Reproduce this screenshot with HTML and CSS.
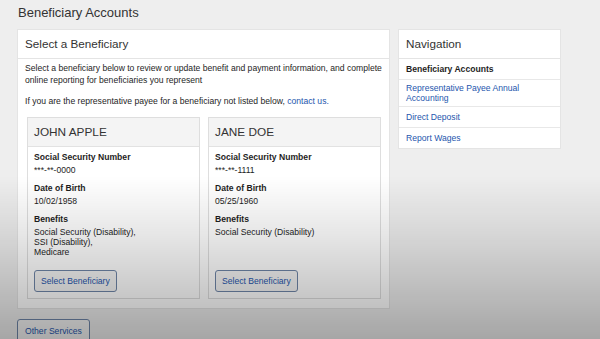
FILE: index.html
```html
<!DOCTYPE html>
<html>
<head>
<meta charset="utf-8">
<link rel="stylesheet" href="styles.css">
</head>
<body>
<div class="page">
  <h1 class="title">Beneficiary Accounts</h1>
  <div class="layout">
    <section class="panel main">
      <div class="panel-head">Select a Beneficiary</div>
      <div class="panel-body">
        <p class="intro">Select a beneficiary below to review or update benefit and payment information, and complete online reporting for beneficiaries you represent</p>
        <p class="intro second">If you are the representative payee for a beneficiary not listed below, <a class="link">contact us.</a></p>
        <div class="cards">
          <div class="card">
            <div class="card-head">JOHN APPLE</div>
            <div class="card-body">
              <div class="label">Social Security Number</div>
              <div class="value">***-**-0000</div>
              <div class="label">Date of Birth</div>
              <div class="value">10/02/1958</div>
              <div class="label">Benefits</div>
              <div class="value">Social Security (Disability),<br>SSI (Disability),<br>Medicare</div>
              <button class="btn">Select Beneficiary</button>
            </div>
          </div>
          <div class="card">
            <div class="card-head">JANE DOE</div>
            <div class="card-body">
              <div class="label">Social Security Number</div>
              <div class="value">***-**-1111</div>
              <div class="label">Date of Birth</div>
              <div class="value">05/25/1960</div>
              <div class="label">Benefits</div>
              <div class="value">Social Security (Disability)</div>
              <div class="spacer"></div>
              <button class="btn">Select Beneficiary</button>
            </div>
          </div>
        </div>
      </div>
    </section>
    <nav class="panel nav">
      <div class="panel-head">Navigation</div>
      <ul class="nav-list">
        <li class="nav-item current">Beneficiary Accounts</li>
        <li class="nav-item"><a class="link">Representative Payee Annual Accounting</a></li>
        <li class="nav-item"><a class="link">Direct Deposit</a></li>
        <li class="nav-item"><a class="link">Report Wages</a></li>
      </ul>
    </nav>
  </div>
  <button class="btn other">Other Services</button>
</div>
<div class="shade"></div>
</body>
</html>
```
FILE: styles.css
```css
html, body {
  margin: 0;
  padding: 0;
  height: 100%;
  overflow: hidden;
}
body {
  background: #eeeeee;
  font-family: "Liberation Sans", Arial, sans-serif;
  color: #1e1e1e;
}
.page {
  padding: 4px 0 0 17px;
}
.title {
  margin: 0 0 0 1px;
  font-size: 13px;
  font-weight: normal;
  line-height: 17px;
  height: 25px;
  color: #333;
}
.layout {
  display: flex;
  align-items: flex-start;
  gap: 8px;
}
.panel {
  background: #fff;
  border: 1px solid #e4e4e4;
  box-sizing: border-box;
}
.main {
  width: 373px;
}
.nav {
  width: 163px;
}
.panel-head {
  height: 28px;
  line-height: 28px;
  padding-left: 7px;
  font-size: 11.7px;
  color: #333;
  border-bottom: 1px solid #e4e4e4;
}
.panel-body {
  padding: 3px 0 9px 7px;
}
.intro {
  margin: 0;
  font-size: 8.6px;
  line-height: 12px;
}
.intro.second {
  margin-top: 9px;
}
.link {
  color: #2456ad;
  text-decoration: none;
}
.cards {
  display: flex;
  gap: 8px;
  margin-top: 10px;
  margin-left: 2px;
}
.card {
  width: 173px;
  border: 1px solid #dedede;
  box-sizing: border-box;
  display: flex;
  flex-direction: column;
}
.card-head {
  background: #f4f4f4;
  height: 28px;
  line-height: 28px;
  padding-left: 6px;
  font-size: 11.8px;
  color: #333;
  border-bottom: 1px solid #e2e2e2;
}
.card-body {
  padding: 3px 6px 6px 6px;
  display: flex;
  flex-direction: column;
  align-items: flex-start;
  flex: 1;
}
.label {
  font-size: 8.6px;
  font-weight: bold;
  line-height: 12px;
  margin-top: 1px;
}
.value {
  font-size: 8.6px;
  line-height: 10px;
  margin-top: 2px;
  margin-bottom: 6px;
}
.spacer {
  flex: 1;
}
.btn {
  font-family: "Liberation Sans", Arial, sans-serif;
  font-size: 8.6px;
  color: #2456ad;
  background: #f4f4f4;
  border: 1px solid #6f86a8;
  border-radius: 3px;
  height: 22px;
  padding: 0 6px;
  margin-top: 7px;
}
.nav-list {
  list-style: none;
  margin: 0;
  padding: 0;
}
.nav-item {
  font-size: 8.6px;
  line-height: 10px;
  padding: 3px 7px;
  min-height: 14px;
  display: flex;
  align-items: center;
  border-bottom: 1px solid #e8e8e8;
}
.nav-item:last-child {
  border-bottom: none;
}
.nav-item.current {
  font-weight: bold;
}
.other {
  margin-top: 10px;
  height: 24px;
  padding: 0 7px;
}
.shade {
  position: fixed;
  left: 0;
  top: 0;
  right: 0;
  bottom: 0;
  pointer-events: none;
  background: linear-gradient(to bottom, rgba(0,0,0,0) 0%, rgba(0,0,0,0) 52%, rgba(0,0,0,0.1) 70%, rgba(0,0,0,0.3) 100%);
}
```
